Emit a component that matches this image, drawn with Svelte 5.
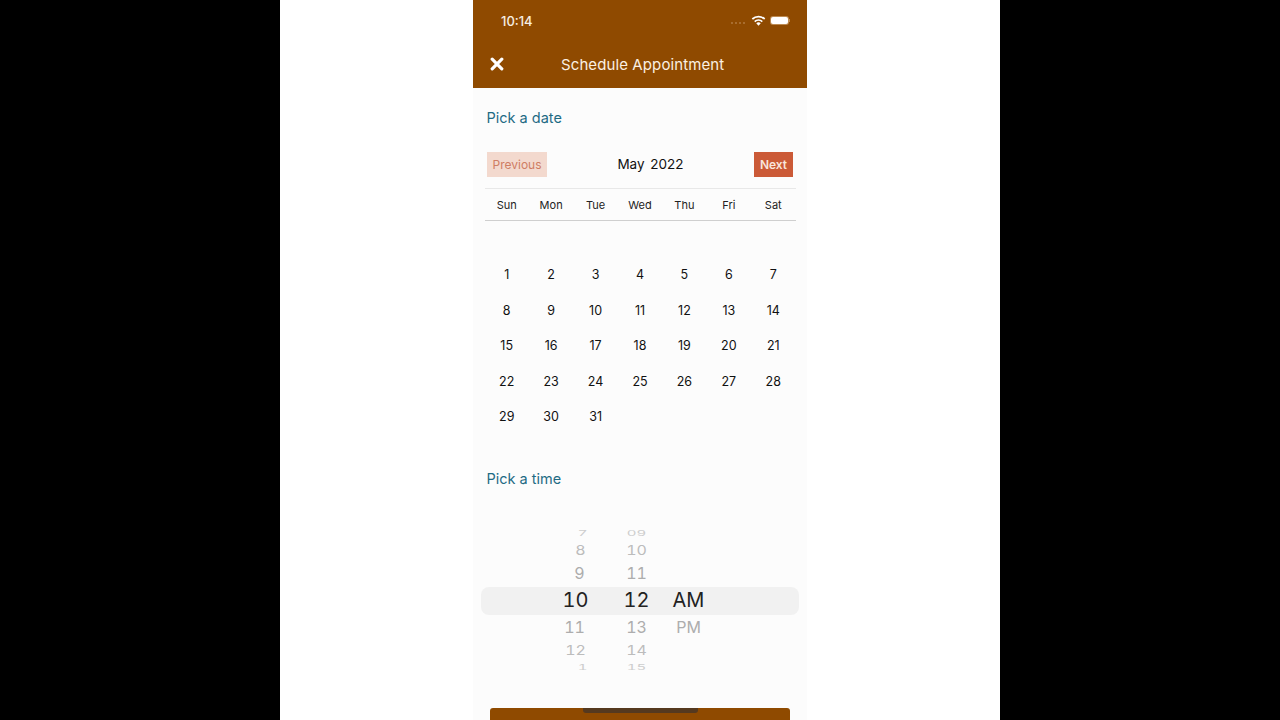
<script>
  const days = ['Sun', 'Mon', 'Tue', 'Wed', 'Thu', 'Fri', 'Sat'];
  const blanks = Array(7).fill('');
  const dates = [...blanks, ...Array.from({ length: 31 }, (_, i) => String(i + 1))];
  const rows = [
    { cls: 'r-far', h: '7', m: '09', p: '', dx: 7 },
    { cls: 'r-mid', h: '8', m: '10', p: '', dx: 5 },
    { cls: 'r-near', h: '9', m: '11', p: '', dx: 4 },
    { cls: 'r-sel', h: '10', m: '12', p: 'AM', dx: 0 },
    { cls: 'r-near', h: '11', m: '13', p: 'PM', dx: -1 },
    { cls: 'r-mid', h: '12', m: '14', p: '', dx: 0 },
    { cls: 'r-far', h: '1', m: '15', p: '', dx: 7 }
  ];
</script>

<div class="stage">
  <main class="phone">
    <header class="head">
      <div class="status">
        <span class="clock">10:14</span>
        <div class="sys">
          <span class="dots"><i></i><i></i><i></i><i></i></span>
          <svg class="wifi" width="15" height="11" viewBox="0 0 14 10" aria-hidden="true">
            <path d="M7 10 4.9 7.5a3.2 3.2 0 0 1 4.2 0Z" fill="#fff" />
            <path d="M2.9 5.4a6.2 6.2 0 0 1 8.2 0l-1.1 1.2a4.6 4.6 0 0 0-6 0Z" fill="#fff" />
            <path d="M.7 3a9.4 9.4 0 0 1 12.6 0l-1.1 1.3a7.7 7.7 0 0 0-10.4 0Z" fill="#fff" />
          </svg>
          <span class="batt"></span>
        </div>
      </div>
      <div class="nav">
        <svg class="close" width="14" height="14" viewBox="0 0 14 14" aria-hidden="true">
          <path d="M2.2 2.2 11.8 11.8M11.8 2.2 2.2 11.8" stroke="#fff" stroke-width="3.2" stroke-linecap="round" />
        </svg>
        <h1>Schedule Appointment</h1>
      </div>
    </header>

    <section class="content">
      <h2>Pick a date</h2>
      <div class="month">
        <button class="btn prev">Previous</button>
        <span class="title">May&nbsp;2022</span>
        <button class="btn next">Next</button>
      </div>
      <div class="weekdays">
        {#each days as d}<span>{d}</span>{/each}
      </div>
      <div class="dates">
        {#each dates as d}<span>{d}</span>{/each}
      </div>

      <h2 class="time">Pick a time</h2>
      <div class="picker">
        <div class="band"></div>
        {#each rows as r}
          <div class="row {r.cls}">
            <span class="h" style="transform: translateX({r.dx}px)">{r.h}</span>
            <span class="m">{r.m}</span>
            <span class="p">{r.p}</span>
          </div>
        {/each}
      </div>
      <button class="cta">Schedule</button>
    </section>
    <div class="home"></div>
  </main>
</div>

<style>
  :global(body) {
    margin: 0;
    background: #000;
  }
  .stage {
    width: 720px;
    height: 720px;
    margin: 0 auto;
    background: #fff;
    display: flex;
    justify-content: center;
    overflow: hidden;
  }
  .phone {
    position: relative;
    width: 334px;
    height: 720px;
    background: #fcfcfc;
    overflow: hidden;
    font-family: "Inter", "Liberation Sans", sans-serif;
  }
  .head {
    height: 88px;
    background: #8f4a00;
    color: #fff;
  }
  .status {
    height: 42px;
    padding: 0 18px 0 28px;
    display: flex;
    align-items: center;
    justify-content: space-between;
  }
  .clock {
    font-size: 13px;
    font-weight: 500;
    color: #f7eee2;
  }
  .sys {
    display: flex;
    align-items: center;
    gap: 5px;
    margin-bottom: 1px;
  }
  .dots {
    display: flex;
    gap: 2px;
    margin-top: 5px;
    margin-right: 1px;
  }
  .dots i {
    width: 2px;
    height: 2px;
    border-radius: 50%;
    background: #b17a3e;
  }
  .batt {
    position: relative;
    width: 17px;
    height: 7px;
    border-radius: 2px;
    background: #fff;
    box-shadow: 0 0 0 1px #bd8a50;
    margin-right: 1px;
    display: block;
  }
  .batt::after {
    content: "";
    position: absolute;
    right: -2px;
    top: 2px;
    width: 1px;
    height: 3px;
    background: #bd8a50;
  }
  .nav {
    height: 46px;
    display: flex;
    align-items: center;
    padding-left: 17px;
    margin-top: -1px;
  }
  .nav h1 {
    margin: 0 0 0 57px;
    font-size: 15px;
    font-weight: 400;
    letter-spacing: 0.1px;
    color: #fbf0e2;
    white-space: nowrap;
  }
  .content {
    padding: 0 11.5px;
  }
  h2 {
    margin: 0 0 0 2px;
    padding-top: 21px;
    font-size: 14.5px;
    line-height: 18px;
    font-weight: 400;
    color: #1f6b84;
  }
  .month {
    margin-top: 24px;
    height: 26px;
    padding: 0 2.5px;
    display: flex;
    align-items: center;
    justify-content: space-between;
  }
  .btn {
    height: 25px;
    border: 0;
    padding: 0;
    font: inherit;
    font-size: 12px;
  }
  .prev {
    width: 60px;
    background: #f3d9ce;
    color: #cf7d63;
  }
  .next {
    width: 39px;
    background: #cb5a37;
    color: #f9e5dc;
    font-weight: 600;
  }
  .title {
    font-size: 13.5px;
    word-spacing: 2px;
    color: #111;
  }
  .weekdays {
    margin-top: 11px;
    height: 31px;
    border-top: 1px solid #e8e8e8;
    border-bottom: 1px solid #cfcfcf;
    display: grid;
    grid-template-columns: repeat(7, 1fr);
    align-items: center;
    text-align: center;
    font-size: 11px;
    color: #222;
  }
  .dates {
    margin-top: 0.5px;
    display: grid;
    grid-template-columns: repeat(7, 1fr);
    grid-auto-rows: 35.5px;
    align-items: center;
    text-align: center;
    font-size: 12.5px;
    color: #111;
  }
  .time {
    padding-top: 35.5px;
  }
  .picker {
    position: relative;
    margin-top: 40px;
    height: 144px;
    font-variant-numeric: tabular-nums;
  }
  .band {
    position: absolute;
    left: -3.5px;
    right: -3.5px;
    top: 59px;
    height: 28px;
    border-radius: 8px;
    background: #f1f1f1;
  }
  .row {
    position: relative;
    display: grid;
    grid-template-columns: 80px 42px 62px;
    justify-content: start;
    padding-left: 51px;
    text-align: center;
    align-items: center;
  }
  .h { display: block; }
  .r-sel {
    height: 32px;
    font-size: 20px;
    color: #222;
  }
  .r-near {
    height: 22px;
    font-size: 16px;
    color: #adadad;
  }
  .r-mid {
    height: 24px;
    font-size: 16px;
    color: #bcbcbc;
    transform: scaleY(0.8);
  }
  .r-far {
    height: 10px;
    font-size: 15px;
    line-height: 10px;
    color: #cdcdcd;
    transform: scaleY(0.5);
  }
  .cta {
    display: block;
    margin: 36px 0 0 5.5px;
    width: 300px;
    height: 27px;
    border: 0;
    border-radius: 3px 3px 0 0;
    background: #8f4a00;
    color: #fff;
    font: inherit;
    font-size: 15px;
    line-height: 18px;
    padding: 9px 0 0;
  }
  .home {
    position: absolute;
    left: 110px;
    top: 708px;
    width: 115px;
    height: 5px;
    border-radius: 0 0 3px 3px;
    background: #55391f;
  }
</style>
